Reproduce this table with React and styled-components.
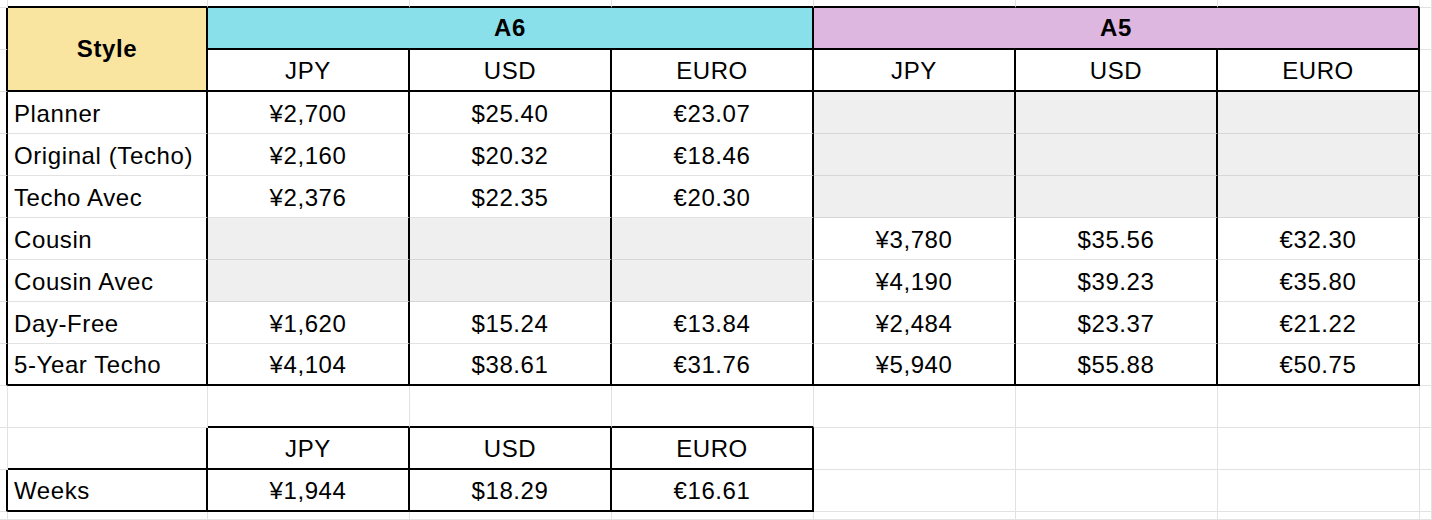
import React from "react";
import styled, { createGlobalStyle } from "styled-components";

const GlobalStyle = createGlobalStyle`
  html, body {
    margin: 0;
    padding: 0;
    background: #ffffff;
  }
  body {
    font-family: "Liberation Sans", Arial, sans-serif;
    color: #000000;
  }
`;

const BLACK = "#000000";
const GRID = "#e2e2e2";
const GRID_ON_FILL = "#d6d6d6";

const Sheet = styled.div`
  display: grid;
  grid-template-columns: 8px 200px repeat(6, 202px) 1fr;
  grid-template-rows: 8px repeat(12, 42px) 1fr;
  width: 1432px;
  height: 520px;
  overflow: hidden;
  background: #ffffff;
`;

const Cell = styled.div`
  box-sizing: border-box;
  min-width: 0;
  min-height: 0;
  grid-column: ${(p) => p.$c + 1} / span ${(p) => p.$cs || 1};
  grid-row: ${(p) => p.$r + 1} / span ${(p) => p.$rs || 1};
  display: flex;
  align-items: ${(p) => (p.$middle ? "center" : "flex-end")};
  justify-content: ${(p) => (p.$center ? "center" : "flex-start")};
  padding: ${(p) => (p.$blank ? "0" : p.$middle ? "0 7px" : "0 6px 5px 6px")};
  background: ${(p) => p.$bg || "transparent"};
  border-right: ${(p) =>
    p.$br ? `2px solid ${BLACK}` : `1px solid ${p.$bg ? GRID_ON_FILL : GRID}`};
  border-bottom: ${(p) =>
    p.$bb ? `2px solid ${BLACK}` : `1px solid ${p.$bg ? GRID_ON_FILL : GRID}`};
  font-size: 24px;
  line-height: 1.15;
  letter-spacing: 0.6px;
  font-weight: ${(p) => (p.$bold ? 700 : 400)};
  white-space: nowrap;
  overflow: hidden;
`;

const YELLOW = "#fae5a0";
const CYAN = "#89e0eb";
const PURPLE = "#deb7e0";
const FILL = "#efefef";

const rows = [
  ["Planner", "¥2,700", "$25.40", "€23.07", null, null, null],
  ["Original (Techo)", "¥2,160", "$20.32", "€18.46", null, null, null],
  ["Techo Avec", "¥2,376", "$22.35", "€20.30", null, null, null],
  ["Cousin", null, null, null, "¥3,780", "$35.56", "€32.30"],
  ["Cousin Avec", null, null, null, "¥4,190", "$39.23", "€35.80"],
  ["Day-Free", "¥1,620", "$15.24", "€13.84", "¥2,484", "$23.37", "€21.22"],
  ["5-Year Techo", "¥4,104", "$38.61", "€31.76", "¥5,940", "$55.88", "€50.75"],
];

const currencies = ["JPY", "USD", "EURO"];

function buildCells() {
  const cells = [];

  // header
  cells.push({ r: 1, c: 1, rs: 2, text: "Style", bg: YELLOW, bold: true, center: true, middle: true, br: true, bb: true });
  cells.push({ r: 1, c: 2, cs: 3, text: "A6", bg: CYAN, bold: true, center: true, middle: true, br: true, bb: true });
  cells.push({ r: 1, c: 5, cs: 3, text: "A5", bg: PURPLE, bold: true, center: true, middle: true, br: true, bb: true });
  [...currencies, ...currencies].forEach((t, i) => {
    cells.push({ r: 2, c: 2 + i, text: t, center: true, br: true, bb: true });
  });

  // body
  rows.forEach((row, ri) => {
    const r = 3 + ri;
    const last = ri === rows.length - 1;
    row.forEach((val, ci) => {
      const c = 1 + ci;
      cells.push({
        r,
        c,
        text: val || "",
        bg: ci > 0 && val === null ? FILL : undefined,
        center: ci > 0,
        br: true,
        bb: last,
      });
    });
  });

  // weeks table
  currencies.forEach((t, i) => {
    cells.push({ r: 11, c: 2 + i, text: t, center: true, br: true, bb: true });
  });
  ["Weeks", "¥1,944", "$18.29", "€16.61"].forEach((t, i) => {
    cells.push({ r: 12, c: 1 + i, text: t, center: i > 0, br: true, bb: true });
  });

  // blanks
  const taken = new Set();
  cells.forEach((cell) => {
    for (let r = cell.r; r < cell.r + (cell.rs || 1); r++)
      for (let c = cell.c; c < cell.c + (cell.cs || 1); c++) taken.add(`${r},${c}`);
  });

  const blackRight = new Set(["12,0", "11,1"]);
  for (let r = 1; r <= 9; r++) blackRight.add(`${r},0`);
  const blackBottom = new Set(["11,1"]);
  for (let c = 1; c <= 7; c++) blackBottom.add(`0,${c}`);
  for (let c = 2; c <= 4; c++) blackBottom.add(`10,${c}`);

  for (let r = 0; r <= 13; r++) {
    for (let c = 0; c <= 8; c++) {
      const key = `${r},${c}`;
      if (taken.has(key)) continue;
      cells.push({ r, c, text: "", blank: true, br: blackRight.has(key), bb: blackBottom.has(key) });
    }
  }
  return cells;
}

const cells = buildCells();

export default function App() {
  return (
    <>
      <GlobalStyle />
      <Sheet>
        {cells.map((cell) => (
          <Cell
            key={`${cell.r}-${cell.c}`}
            $r={cell.r}
            $c={cell.c}
            $rs={cell.rs}
            $cs={cell.cs}
            $bg={cell.bg}
            $bold={cell.bold}
            $blank={cell.blank}
            $center={cell.center}
            $middle={cell.middle}
            $br={cell.br}
            $bb={cell.bb}
          >
            {cell.text}
          </Cell>
        ))}
      </Sheet>
    </>
  );
}
